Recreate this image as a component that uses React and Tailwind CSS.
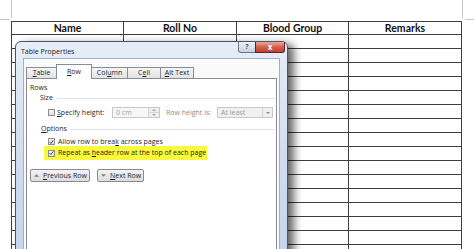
import React from "react";

const headers = ["Name", "Roll No", "Blood Group", "Remarks"];
const colWidths = ["w-[112px]", "w-[113px]", "w-[112px]", "w-[113px]"];
const bodyRows = Array.from({ length: 16 });

const CheckBox = ({ checked }) => (
  <span className="flex h-[7px] w-[7px] shrink-0 items-center justify-center border border-[#8e8f8f] bg-gradient-to-b from-[#f4f4f4] to-[#dedede]">
    {checked && (
      <svg viewBox="0 0 8 8" className="h-[6px] w-[6px]">
        <path d="M1 4.2 L3 6.3 L7 1.2" fill="none" stroke="#1d3a68" strokeWidth="1.4" />
      </svg>
    )}
  </span>
);

const Tab = ({ label, u, width, active }) => {
  const idx = label.indexOf(u);
  const text = (
    <span>
      {label.slice(0, idx)}
      <span className="underline">{u}</span>
      {label.slice(idx + 1)}
    </span>
  );
  if (active) {
    return (
      <div className={`relative z-10 -mb-px -ml-px flex h-[15px] ${width} items-center justify-center border border-b-0 border-[#898c95] bg-white`}>
        {text}
      </div>
    );
  }
  return (
    <div className={`-ml-px flex h-[11px] ${width} items-center justify-center border border-b-0 border-[#898c95] bg-gradient-to-b from-[#f6f6f6] to-[#e2e2e2] first:ml-0`}>
      {text}
    </div>
  );
};

const Dialog = () => (
  <div className="absolute left-[15px] top-[41px] h-[230px] w-[273px] rounded-t-[6px] border border-[#4c5663] bg-gradient-to-b from-[#e6eef8] via-[#cfdeef] to-[#c2d5ec] shadow-[6px_3px_8px_rgba(0,0,0,0.6)] font-['Open_Sans',sans-serif] text-[7px] leading-[10px] text-[#1e1e1e] whitespace-nowrap">
    {/* Title bar */}
    <div className="flex h-[16px] items-start">
      <div className="pl-[5px] pt-[5px] text-[#1b1b1b]">Table Properties</div>
      <div className="ml-auto mr-[2px] flex">
        <div className="flex h-[11px] w-[18px] items-center justify-center rounded-bl-[3px] border border-t-0 border-[#6d7885] bg-gradient-to-b from-[#eef3f9] to-[#c6d3e2] text-[7px] font-bold text-[#4a5a6e]">
          ?
        </div>
        <div className="-ml-px flex h-[11px] w-[30px] items-center justify-center rounded-br-[3px] border border-t-0 border-[#5b2720] bg-gradient-to-b from-[#e9a99c] via-[#d2604e] to-[#c2402d] text-[8px] font-bold text-white">
          x
        </div>
      </div>
    </div>
    {/* Client area */}
    <div className="mx-[7px] h-[220px] border border-[#9fb1c6] bg-[#fafafa] px-[2px] pt-[5px]">
      <div className="flex h-[14px] items-end">
        <Tab label="Table" u="T" width="w-[31px]" />
        <Tab label="Row" u="R" width="w-[36px]" active />
        <Tab label="Column" u="u" width="w-[37px]" />
        <Tab label="Cell" u="e" width="w-[34px]" />
        <Tab label="Alt Text" u="A" width="w-[34px]" />
      </div>
      <div className="h-[200px] w-[251px] border border-[#898c95] bg-white pt-[4px]">
        <div className="pl-[3px]">Rows</div>
        <div className="flex h-[10px] items-center pl-[13px] pr-[1px]">
          <span>Size</span>
          <div className="ml-[4px] h-px flex-1 bg-[#dcdfe3]" />
        </div>
        {/* Specify height row */}
        <div className="mt-[4px] flex h-[11px] items-center pl-[21px]">
          <CheckBox />
          <span className="ml-[2px] w-[55px]">
            <span className="underline">S</span>pecify height:
          </span>
          <div className="flex h-[11px] w-[48px] border border-[#c5c8cd] bg-[#f7f7f7]">
            <span className="flex-1 pl-[3px] text-[#9a9a9a]">0 cm</span>
            <div className="flex w-[11px] flex-col border-l border-[#d4d6da] bg-[#eeeeee]">
              <div className="flex flex-1 items-center justify-center border-b border-[#d4d6da]">
                <svg viewBox="0 0 6 3" className="h-[2px] w-[4px]"><path d="M0 3 L3 0 L6 3 Z" fill="#a9a9a9" /></svg>
              </div>
              <div className="flex flex-1 items-center justify-center">
                <svg viewBox="0 0 6 3" className="h-[2px] w-[4px]"><path d="M0 0 L3 3 L6 0 Z" fill="#a9a9a9" /></svg>
              </div>
            </div>
          </div>
          <span className="ml-[6px] w-[51px] text-[#8d8d8d]">Row height is:</span>
          <div className="flex h-[11px] w-[56px] border border-[#c5c8cd] bg-[#f0f0f0]">
            <span className="flex-1 pl-[3px] text-[#9a9a9a]">At least</span>
            <div className="flex w-[10px] items-center justify-center border-l border-[#d4d6da]">
              <svg viewBox="0 0 6 3" className="h-[2px] w-[4px]"><path d="M0 0 L3 3 L6 0 Z" fill="#8a8a8a" /></svg>
            </div>
          </div>
        </div>
        {/* Options */}
        <div className="mt-[6px] flex h-[10px] items-center pl-[14px] pr-[1px]">
          <span>
            <span className="underline">O</span>ptions
          </span>
          <div className="ml-[4px] h-px flex-1 bg-[#dcdfe3]" />
        </div>
        <div className="mt-[3px] flex h-[9px] items-center pl-[21px]">
          <CheckBox checked />
          <span className="ml-[3px]">
            Allow row to brea<span className="underline">k</span> across pages
          </span>
        </div>
        <div className="ml-[17px] flex h-[14px] w-fit items-center bg-[#f8f83c] pl-[4px] pr-[1px]">
          <CheckBox checked />
          <span className="ml-[3px]">
            Repeat as <span className="underline">h</span>eader row at the top of each page
          </span>
        </div>
        {/* Buttons */}
        <div className="ml-[3px] mt-[9px] flex gap-[7px]">
          <button className="flex h-[13px] w-[60px] items-center whitespace-nowrap rounded-[2px] border border-[#8a8a8a] bg-gradient-to-b from-[#f4f4f4] to-[#dcdcdc] pl-[3px]">
            <svg viewBox="0 0 6 3" className="h-[3px] w-[5px] shrink-0"><path d="M0 3 L3 0 L6 3 Z" fill="#7a7a7a" /></svg>
            <span className="ml-[4px]">
              <span className="underline">P</span>revious Row
            </span>
          </button>
          <button className="flex h-[13px] w-[47px] items-center whitespace-nowrap rounded-[2px] border border-[#8a8a8a] bg-gradient-to-b from-[#f4f4f4] to-[#dcdcdc] pl-[3px]">
            <svg viewBox="0 0 6 3" className="h-[3px] w-[5px] shrink-0"><path d="M0 0 L3 3 L6 0 Z" fill="#7a7a7a" /></svg>
            <span className="ml-[4px]">
              <span className="underline">N</span>ext Row
            </span>
          </button>
        </div>
      </div>
    </div>
  </div>
);

export default function App() {
  return (
    <div className="relative h-[249px] w-[474px] overflow-hidden bg-white">
      {/* page corner marks */}
      <div className="flex h-[21px] justify-between">
        <div className="flex w-[12px] flex-col">
          <div className="h-[18px] border-r border-[#c4c4c4]" />
          <div className="mt-auto mb-px h-px w-[9px] bg-[#c4c4c4]" />
        </div>
        <div className="flex w-[12px] flex-col">
          <div className="h-[18px] border-l border-[#c4c4c4]" />
          <div className="mt-auto mb-px ml-[3px] h-px bg-[#c4c4c4]" />
        </div>
      </div>

      {/* table */}
      <div className="ml-[11px] w-[451px] border-l border-t border-[#3f3f3f] font-['Lato',sans-serif]">
        <div className="flex h-[13px] border-b border-[#3f3f3f]">
          {headers.map((h, i) => (
            <div
              key={h}
              className={`${colWidths[i]} flex items-center justify-center border-r border-[#3f3f3f] text-[10.5px] font-bold leading-none text-[#111]`}
            >
              {h}
            </div>
          ))}
        </div>
        {bodyRows.map((_, r) => (
          <div key={r} className="flex h-[14px] border-b border-[#3f3f3f]">
            {colWidths.map((w, i) => (
              <div key={i} className={`${w} border-r border-[#3f3f3f]`} />
            ))}
          </div>
        ))}
      </div>

      <Dialog />
    </div>
  );
}
